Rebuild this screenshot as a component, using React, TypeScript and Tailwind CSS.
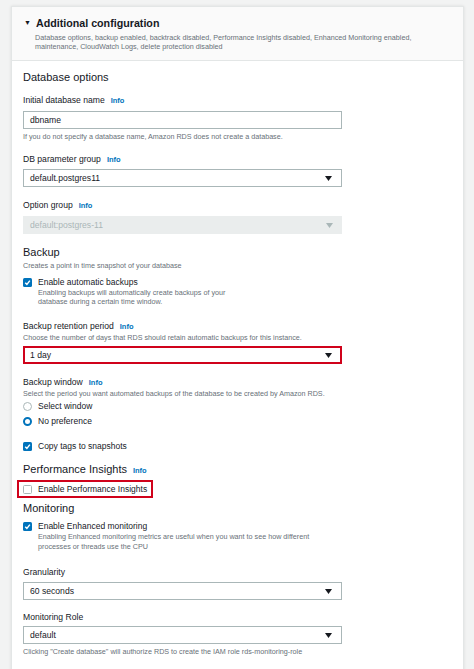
import React from "react";

const Info = () => (
  <span className="ml-[6px] text-[7.5px] font-bold text-[#0073bb]">Info</span>
);

const Caret = ({ disabled }: { disabled?: boolean }) => (
  <svg width="7" height="5" viewBox="0 0 7 5" className="shrink-0">
    <path d="M0 0 L7 0 L3.5 5 Z" fill={disabled ? "#aab7b8" : "#16191f"} />
  </svg>
);

function Select({ value, disabled, highlight }: { value: string; disabled?: boolean; highlight?: boolean }) {
  if (highlight) {
    return (
      <div className="flex h-[18px] w-[319px] items-center justify-between border-2 border-[#d0021b] bg-white pl-[5px] pr-[8px] text-[8.6px] leading-[12px] text-[#16191f]">
        <span>{value}</span>
        <Caret />
      </div>
    );
  }
  return (
    <div
      className={
        disabled
          ? "flex h-[18px] w-[319px] items-center justify-between bg-[#eaeded] pl-[7px] pr-[9px] text-[8.6px] leading-[12px] text-[#aab7b8]"
          : "flex h-[18px] w-[319px] items-center justify-between border border-[#aab7b8] bg-white pl-[6px] pr-[9px] text-[8.6px] leading-[12px] text-[#16191f]"
      }
    >
      <span>{value}</span>
      <Caret disabled={disabled} />
    </div>
  );
}

const Check = ({ checked }: { checked?: boolean }) =>
  checked ? (
    <span className="flex h-[9px] w-[9px] shrink-0 items-center justify-center rounded-[1.5px] bg-[#0073bb]">
      <svg width="7" height="7" viewBox="0 0 8 8">
        <path d="M1.4 4.2 L3.3 6.1 L6.7 1.8" stroke="white" strokeWidth="1.6" fill="none" />
      </svg>
    </span>
  ) : (
    <span className="h-[9px] w-[9px] shrink-0 rounded-[1.5px] border border-[#aab7b8] bg-white" />
  );

const Radio = ({ checked }: { checked?: boolean }) =>
  checked ? (
    <span className="h-[9px] w-[9px] shrink-0 rounded-full border-[2.5px] border-[#0073bb] bg-white" />
  ) : (
    <span className="h-[9px] w-[9px] shrink-0 rounded-full border border-[#aab7b8] bg-white" />
  );

const Label = ({ children, info }: { children: React.ReactNode; info?: boolean }) => (
  <div className="flex items-baseline text-[8.6px] leading-[12px] text-[#16191f]">
    {children}
    {info && <Info />}
  </div>
);

const Hint = ({ children, leading = "leading-[10px]" }: { children: React.ReactNode; leading?: string }) => (
  <p className={`text-[7.2px] text-[#687078] ${leading}`}>{children}</p>
);

const Heading = ({ children, info }: { children: React.ReactNode; info?: boolean }) => (
  <div className="flex items-baseline text-[11px] leading-[14px] text-[#16191f]">
    {children}
    {info && <Info />}
  </div>
);

export default function App() {
  return (
    <div
      className="h-[669px] overflow-hidden bg-[#f2f3f3] px-[11px] pt-[6px]"
      style={{ fontFamily: '"Liberation Sans", Arial, sans-serif' }}
    >
      <div className="h-[680px] w-[453px] border border-[#e3e6e6] bg-white shadow-[0_0_3px_rgba(0,0,0,0.1)]">
        {/* Header */}
        <div className="border-b border-[#e3e6e6] bg-[#fafafa] px-[12px] pb-[9px] pt-[9px]">
          <div className="flex items-center gap-[5px] text-[10.7px] font-bold leading-[14px] text-[#16191f]">
            <span className="text-[7px]">▼</span>
            <span>Additional configuration</span>
          </div>
          <p className="mt-[3px] pl-[11px] text-[7.2px] leading-[9px] text-[#687078]">
            Database options, backup enabled, backtrack disabled, Performance Insights disabled, Enhanced Monitoring enabled,
            <br />
            maintenance, CloudWatch Logs, delete protection disabled
          </p>
        </div>

        {/* Body */}
        <div className="px-[11px] pt-[9px]">
          <Heading>Database options</Heading>

          <div className="mt-[10px]">
            <Label info>Initial database name</Label>
            <div className="mt-[4px] flex h-[18px] w-[319px] items-center border border-[#aab7b8] pl-[6px] text-[8.6px] text-[#16191f]">
              dbname
            </div>
            <div className="mt-[3px]">
              <Hint>If you do not specify a database name, Amazon RDS does not create a database.</Hint>
            </div>
          </div>

          <div className="mt-[11px]">
            <Label info>DB parameter group</Label>
            <div className="mt-[3px]">
              <Select value="default.postgres11" />
            </div>
          </div>

          <div className="mt-[12px]">
            <Label info>Option group</Label>
            <div className="mt-[4px]">
              <Select value="default:postgres-11" disabled />
            </div>
          </div>

          <div className="mt-[11px]">
            <Heading>Backup</Heading>
            <div className="mt-[2px]">
              <Hint>Creates a point in time snapshot of your database</Hint>
            </div>
            <div className="mt-[5px] flex items-start gap-[6px]">
              <span className="mt-[2px]">
                <Check checked />
              </span>
              <div>
                <div className="text-[8.5px] leading-[12px] text-[#16191f]">Enable automatic backups</div>
                <Hint leading="leading-[9px]">
                  Enabling backups will automatically create backups of your
                  <br />
                  database during a certain time window.
                </Hint>
              </div>
            </div>
          </div>

          <div className="mt-[14px]">
            <Label info>Backup retention period</Label>
            <Hint>Choose the number of days that RDS should retain automatic backups for this instance.</Hint>
            <div className="mt-[3px]">
              <Select value="1 day" highlight />
            </div>
          </div>

          <div className="mt-[12px]">
            <Label info>Backup window</Label>
            <Hint>Select the period you want automated backups of the database to be created by Amazon RDS.</Hint>
            <div className="mt-[1px] flex items-center gap-[6px] text-[8.5px] leading-[12px] text-[#16191f]">
              <Radio />
              <span>Select window</span>
            </div>
            <div className="mt-[3px] flex items-center gap-[6px] text-[8.5px] leading-[12px] text-[#16191f]">
              <Radio checked />
              <span>No preference</span>
            </div>
          </div>

          <div className="mt-[13px] flex items-center gap-[6px] text-[8.5px] leading-[12px] text-[#16191f]">
            <Check checked />
            <span>Copy tags to snapshots</span>
          </div>

          <div className="mt-[10px]">
            <Heading info>Performance Insights</Heading>
            <div className="-ml-[6px] mt-[2px] flex h-[18px] w-fit items-center gap-[6px] whitespace-nowrap border-2 border-[#d0021b] pl-[4px] pr-[4px] text-[8.5px] text-[#16191f]">
              <Check />
              <span>Enable Performance Insights</span>
            </div>
          </div>

          <div className="mt-[3px]">
            <Heading>Monitoring</Heading>
            <div className="mt-[5px] flex items-start gap-[6px]">
              <span className="mt-[2px]">
                <Check checked />
              </span>
              <div>
                <div className="text-[8.5px] leading-[12px] text-[#16191f]">Enable Enhanced monitoring</div>
                <Hint>
                  Enabling Enhanced monitoring metrics are useful when you want to see how different
                  <br />
                  processes or threads use the CPU
                </Hint>
              </div>
            </div>
          </div>

          <div className="mt-[14px]">
            <Label>Granularity</Label>
            <div className="mt-[4px]">
              <Select value="60 seconds" />
            </div>
          </div>

          <div className="mt-[11px]">
            <Label>Monitoring Role</Label>
            <div className="mt-[3px]">
              <Select value="default" />
            </div>
            <div className="mt-[3px]">
              <Hint>Clicking "Create database" will authorize RDS to create the IAM role rds-monitoring-role</Hint>
            </div>
          </div>
        </div>
      </div>
    </div>
  );
}
